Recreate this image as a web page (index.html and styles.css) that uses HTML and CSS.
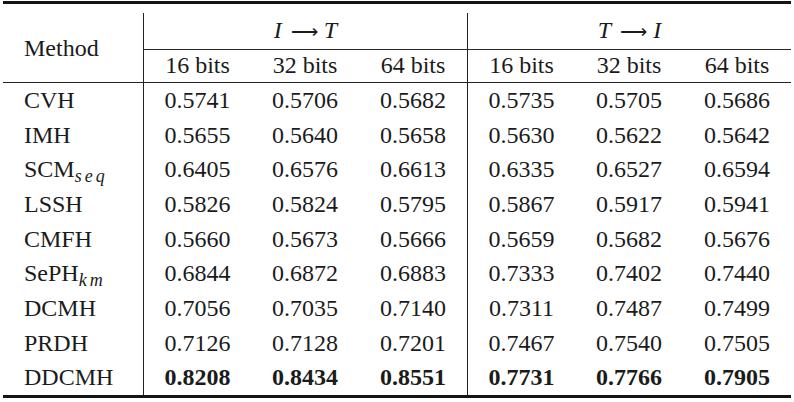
FILE: index.html
```html
<!DOCTYPE html>
<html lang="en">
<head>
<meta charset="utf-8">
<title>Results</title>
<link rel="stylesheet" href="styles.css">
</head>
<body>
<div class="page">
<table class="results">
<colgroup><col class="c-method"><col class="c-val"><col class="c-val"><col class="c-val"><col class="c-val"><col class="c-val"><col class="c-val"></colgroup>
<thead>
<tr class="h1">
<th class="method" rowspan="2">Method</th>
<th colspan="3" class="grp"><div class="grp-in"><span class="mi">I</span><span class="arr">⟶</span><span class="mi">T</span></div></th>
<th colspan="3" class="grp"><div class="grp-in"><span class="mi">T</span><span class="arr">⟶</span><span class="mi">I</span></div></th>
</tr>
<tr class="h2">
<th class="sep">16 bits</th><th>32 bits</th><th>64 bits</th>
<th class="sep">16 bits</th><th>32 bits</th><th>64 bits</th>
</tr>
</thead>
<tbody>
<tr><td class="name">CVH</td><td class="sep">0.5741</td><td>0.5706</td><td>0.5682</td><td class="sep">0.5735</td><td>0.5705</td><td>0.5686</td></tr>
<tr><td class="name">IMH</td><td class="sep">0.5655</td><td>0.5640</td><td>0.5658</td><td class="sep">0.5630</td><td>0.5622</td><td>0.5642</td></tr>
<tr><td class="name">SCM<sub class="idx">seq</sub></td><td class="sep">0.6405</td><td>0.6576</td><td>0.6613</td><td class="sep">0.6335</td><td>0.6527</td><td>0.6594</td></tr>
<tr><td class="name">LSSH</td><td class="sep">0.5826</td><td>0.5824</td><td>0.5795</td><td class="sep">0.5867</td><td>0.5917</td><td>0.5941</td></tr>
<tr><td class="name">CMFH</td><td class="sep">0.5660</td><td>0.5673</td><td>0.5666</td><td class="sep">0.5659</td><td>0.5682</td><td>0.5676</td></tr>
<tr><td class="name">SePH<sub class="idx">km</sub></td><td class="sep">0.6844</td><td>0.6872</td><td>0.6883</td><td class="sep">0.7333</td><td>0.7402</td><td>0.7440</td></tr>
<tr><td class="name">DCMH</td><td class="sep">0.7056</td><td>0.7035</td><td>0.7140</td><td class="sep">0.7311</td><td>0.7487</td><td>0.7499</td></tr>
<tr><td class="name">PRDH</td><td class="sep">0.7126</td><td>0.7128</td><td>0.7201</td><td class="sep">0.7467</td><td>0.7540</td><td>0.7505</td></tr>
<tr class="best"><td class="name">DDCMH</td><td class="sep">0.8208</td><td>0.8434</td><td>0.8551</td><td class="sep">0.7731</td><td>0.7766</td><td>0.7905</td></tr>
</tbody>
</table>
</div>
</body>
</html>
```

FILE: styles.css
```css
html, body {
  margin: 0;
  padding: 0;
  background: #ffffff;
}

body {
  font-family: "Liberation Serif", "Times New Roman", serif;
  font-size: 24px;
  color: #1b1b1b;
}

.page {
  padding: 1px 3px 0 3px;
}

.results {
  border-collapse: separate;
  border-spacing: 0;
  table-layout: fixed;
  width: 788px;
  border-top: 3px solid #141414;
  border-bottom: 3px solid #141414;
}

.c-method { width: 140px; }
.c-val { width: 108px; }

.results th,
.results td {
  padding: 0;
  font-weight: normal;
  text-align: center;
  white-space: nowrap;
}

.results .method {
  text-align: left;
  padding-left: 21px;
  padding-top: 9px;
  line-height: 26px;
  vertical-align: middle;
  border-bottom: 1px solid #222;
}

.results .grp {
  vertical-align: top;
  border-bottom: 1px solid #2a2a2a;
}

.grp-in {
  margin-top: 9px;
  height: 36px;
  line-height: 34px;
  border-left: 1px solid #222;
}

.mi {
  font-style: italic;
}

.arr {
  font-family: "DejaVu Sans", sans-serif;
  font-size: 19px;
  font-weight: 200;
  margin: 0 6px 0 9px;
}

.h2 th {
  line-height: 30px;
  padding-bottom: 2px;
  border-bottom: 1px solid #222;
}

.results .sep {
  border-left: 1px solid #222;
}

.results tbody td {
  height: 34.67px;
  line-height: 34.67px;
}

.results tbody .name {
  text-align: left;
  padding-left: 21px;
}

.idx {
  font-size: 18px;
  font-style: italic;
  letter-spacing: 3px;
  line-height: 0;
  vertical-align: -5px;
}

.best td:not(.name) {
  font-weight: bold;
}
```
